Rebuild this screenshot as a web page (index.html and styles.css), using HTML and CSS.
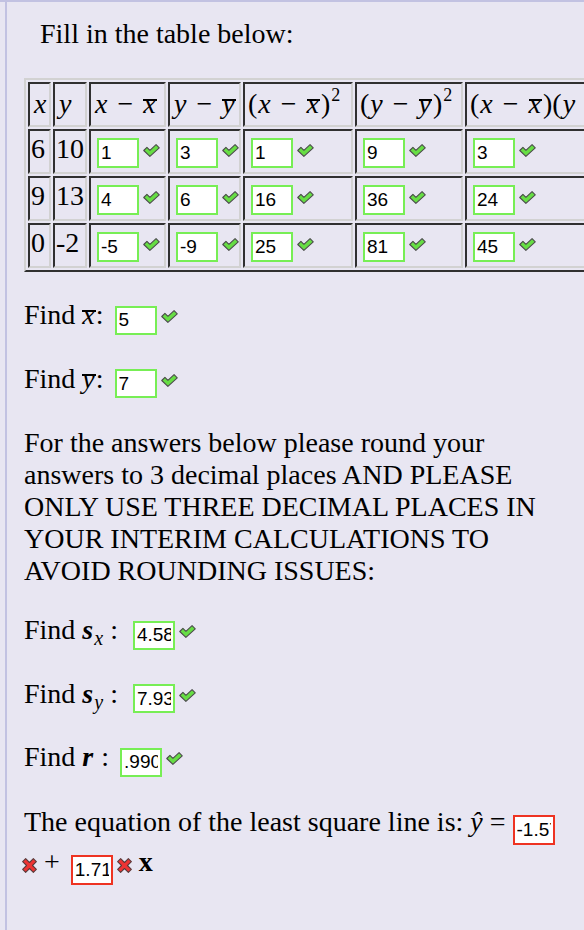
FILE: index.html
```html
<!DOCTYPE html>
<html>
<head>
<meta charset="utf-8">
<title>Least squares</title>
<link rel="stylesheet" href="styles.css">
</head>
<body>
<div class="page">
  <p class="intro">Fill in the table below:</p>

  <table class="grid">
    <tr class="head">
      <td class="c1"><div class="cell"><i>x</i></div></td>
      <td class="c2"><div class="cell"><i>y</i></div></td>
      <td class="c3"><div class="cell"><i>x</i><span class="mo">−</span><i class="bar">x</i></div></td>
      <td class="c4"><div class="cell"><i>y</i><span class="mo">−</span><i class="bar">y</i></div></td>
      <td class="c5"><div class="cell">(<i>x</i><span class="mo">−</span><i class="bar">x</i>)<sup>2</sup></div></td>
      <td class="c6"><div class="cell">(<i>y</i><span class="mo">−</span><i class="bar">y</i>)<sup>2</sup></div></td>
      <td class="c7"><div class="cell">(<i>x</i><span class="mo">−</span><i class="bar">x</i>)(<i>y</i><span class="mo">−</span><i class="bar">y</i>)</div></td>
    </tr>
    <tr>
      <td><div class="cell num">6</div></td>
      <td><div class="cell num">10</div></td>
      <td><div class="cell"><input class="ans" value="1" readonly><svg class="ok" viewBox="0 0 16 12"><polygon points="0.7,6 3.7,3 6.5,5.8 12.3,0.5 15.3,3.5 6.5,11.5"/></svg></div></td>
      <td><div class="cell"><input class="ans" value="3" readonly><svg class="ok" viewBox="0 0 16 12"><polygon points="0.7,6 3.7,3 6.5,5.8 12.3,0.5 15.3,3.5 6.5,11.5"/></svg></div></td>
      <td><div class="cell"><input class="ans" value="1" readonly><svg class="ok" viewBox="0 0 16 12"><polygon points="0.7,6 3.7,3 6.5,5.8 12.3,0.5 15.3,3.5 6.5,11.5"/></svg></div></td>
      <td><div class="cell"><input class="ans" value="9" readonly><svg class="ok" viewBox="0 0 16 12"><polygon points="0.7,6 3.7,3 6.5,5.8 12.3,0.5 15.3,3.5 6.5,11.5"/></svg></div></td>
      <td><div class="cell"><input class="ans" value="3" readonly><svg class="ok" viewBox="0 0 16 12"><polygon points="0.7,6 3.7,3 6.5,5.8 12.3,0.5 15.3,3.5 6.5,11.5"/></svg></div></td>
    </tr>
    <tr>
      <td><div class="cell num">9</div></td>
      <td><div class="cell num">13</div></td>
      <td><div class="cell"><input class="ans" value="4" readonly><svg class="ok" viewBox="0 0 16 12"><polygon points="0.7,6 3.7,3 6.5,5.8 12.3,0.5 15.3,3.5 6.5,11.5"/></svg></div></td>
      <td><div class="cell"><input class="ans" value="6" readonly><svg class="ok" viewBox="0 0 16 12"><polygon points="0.7,6 3.7,3 6.5,5.8 12.3,0.5 15.3,3.5 6.5,11.5"/></svg></div></td>
      <td><div class="cell"><input class="ans" value="16" readonly><svg class="ok" viewBox="0 0 16 12"><polygon points="0.7,6 3.7,3 6.5,5.8 12.3,0.5 15.3,3.5 6.5,11.5"/></svg></div></td>
      <td><div class="cell"><input class="ans" value="36" readonly><svg class="ok" viewBox="0 0 16 12"><polygon points="0.7,6 3.7,3 6.5,5.8 12.3,0.5 15.3,3.5 6.5,11.5"/></svg></div></td>
      <td><div class="cell"><input class="ans" value="24" readonly><svg class="ok" viewBox="0 0 16 12"><polygon points="0.7,6 3.7,3 6.5,5.8 12.3,0.5 15.3,3.5 6.5,11.5"/></svg></div></td>
    </tr>
    <tr>
      <td><div class="cell num">0</div></td>
      <td><div class="cell num">-2</div></td>
      <td><div class="cell"><input class="ans" value="-5" readonly><svg class="ok" viewBox="0 0 16 12"><polygon points="0.7,6 3.7,3 6.5,5.8 12.3,0.5 15.3,3.5 6.5,11.5"/></svg></div></td>
      <td><div class="cell"><input class="ans" value="-9" readonly><svg class="ok" viewBox="0 0 16 12"><polygon points="0.7,6 3.7,3 6.5,5.8 12.3,0.5 15.3,3.5 6.5,11.5"/></svg></div></td>
      <td><div class="cell"><input class="ans" value="25" readonly><svg class="ok" viewBox="0 0 16 12"><polygon points="0.7,6 3.7,3 6.5,5.8 12.3,0.5 15.3,3.5 6.5,11.5"/></svg></div></td>
      <td><div class="cell"><input class="ans" value="81" readonly><svg class="ok" viewBox="0 0 16 12"><polygon points="0.7,6 3.7,3 6.5,5.8 12.3,0.5 15.3,3.5 6.5,11.5"/></svg></div></td>
      <td><div class="cell"><input class="ans" value="45" readonly><svg class="ok" viewBox="0 0 16 12"><polygon points="0.7,6 3.7,3 6.5,5.8 12.3,0.5 15.3,3.5 6.5,11.5"/></svg></div></td>
    </tr>
  </table>

  <p class="find first">Find <i class="bar">x</i>: <input class="ans" value="5" readonly><svg class="ok" viewBox="0 0 16 12"><polygon points="0.7,6 3.7,3 6.5,5.8 12.3,0.5 15.3,3.5 6.5,11.5"/></svg></p>
  <p class="find">Find <i class="bar">y</i>: <input class="ans" value="7" readonly><svg class="ok" viewBox="0 0 16 12"><polygon points="0.7,6 3.7,3 6.5,5.8 12.3,0.5 15.3,3.5 6.5,11.5"/></svg></p>

  <p class="note">For the answers below please round your answers to 3 decimal places AND PLEASE ONLY USE THREE DECIMAL PLACES IN YOUR INTERIM CALCULATIONS TO AVOID ROUNDING ISSUES:</p>

  <p class="find after-note">Find <i class="mv">s</i><sub><i>x</i></sub> : <input class="ans wide" value="4.583" readonly><svg class="ok" viewBox="0 0 16 12"><polygon points="0.7,6 3.7,3 6.5,5.8 12.3,0.5 15.3,3.5 6.5,11.5"/></svg></p>
  <p class="find">Find <i class="mv">s</i><sub><i>y</i></sub> : <input class="ans wide" value="7.937" readonly><svg class="ok" viewBox="0 0 16 12"><polygon points="0.7,6 3.7,3 6.5,5.8 12.3,0.5 15.3,3.5 6.5,11.5"/></svg></p>
  <p class="find">Find <i class="mv">r</i> : <input class="ans" value=".990" readonly><svg class="ok" viewBox="0 0 16 12"><polygon points="0.7,6 3.7,3 6.5,5.8 12.3,0.5 15.3,3.5 6.5,11.5"/></svg></p>

  <p class="eq">The equation of the least square line is: <i>ŷ</i> = <input class="ans wrong" value="-1.571" readonly><wbr><svg class="bad lead" viewBox="0 0 14 14"><polygon points="0.6,3.4 3.4,0.6 7,4.2 10.6,0.6 13.4,3.4 9.8,7 13.4,10.6 10.6,13.4 7,9.8 3.4,13.4 0.6,10.6 4.2,7"/></svg> + <input class="ans wrong slope" value="1.714" readonly><svg class="bad" viewBox="0 0 14 14"><polygon points="0.6,3.4 3.4,0.6 7,4.2 10.6,0.6 13.4,3.4 9.8,7 13.4,10.6 10.6,13.4 7,9.8 3.4,13.4 0.6,10.6 4.2,7"/></svg> <b>x</b></p>
</div>
</body>
</html>
```

FILE: styles.css
```css
html {
  overflow: hidden;
}

body {
  margin: 0;
  background: #e8e6f2;
  border-top: 2px solid #c2c2e2;
  font-family: "Liberation Serif", "Times New Roman", serif;
  font-size: 28px;
  line-height: 32px;
  color: #000;
}

.page {
  margin-left: 5px;
  border-left: 2px solid #c2c2e2;
  padding: 0 19px 0 17px;
  min-height: 928px;
  box-sizing: border-box;
}

p {
  margin: 0;
}

.intro {
  padding-top: 16px;
  padding-left: 16px;
}

/* ---------- table ---------- */
.grid {
  margin-top: 28px;
  table-layout: fixed;
  width: 621px;
  border-collapse: separate;
  border-spacing: 2px;
  border: 2px solid;
  border-color: #d2d2d2 #303030 #303030 #d2d2d2;
}

.grid td {
  padding: 0;
  border: 2px solid;
  border-color: #303030 #d2d2d2 #d2d2d2 #303030;
  vertical-align: top;
  box-sizing: border-box;
  overflow: hidden;
}

.c1 { width: 23px; }
.c2 { width: 34px; }
.c3 { width: 77px; }
.c4 { width: 73px; }
.c5 { width: 110px; }
.c6 { width: 108px; }
.c7 { width: 176px; }

.cell {
  height: 41px;
  line-height: 35px;
  white-space: nowrap;
  padding-left: 6px;
}

.cell.num {
  padding-left: 1px;
}

.head .cell {
  line-height: 39px;
  padding-left: 3px;
}

.head i {
  margin: 0 1px;
}

.mo {
  margin: 0 9px;
}

.bar {
  display: inline-block;
  line-height: 5px;
  border-top: 2px solid #000;
  padding-right: 1px;
}

.head sup {
  font-size: 18px;
  vertical-align: 12px;
  line-height: 0;
  margin-left: 1px;
}

/* ---------- inputs & marks ---------- */
.ans {
  box-sizing: border-box;
  width: 42px;
  height: 30px;
  margin: 0;
  padding: 0 2px;
  border: 2px solid #77ee55;
  background: #fff;
  color: #000;
  font-family: "Liberation Sans", Arial, sans-serif;
  font-size: 19px;
  vertical-align: -1px;
  outline: none;
}

.ans.wrong {
  border-color: #ee3322;
}

.ok {
  width: 17px;
  height: 13px;
  margin-left: 4px;
  vertical-align: 1px;
}

.ok polygon {
  fill: #66dd44;
  stroke: #4a4a4a;
  stroke-width: 1;
  stroke-linejoin: round;
}

.bad {
  width: 15px;
  height: 15px;
  margin-left: 4px;
  vertical-align: -2px;
}

.bad.lead {
  margin-left: -2px;
}

.bad polygon {
  fill: #ee3333;
  stroke: #5a3a3a;
  stroke-width: 1;
  stroke-linejoin: round;
}

/* ---------- text rows ---------- */
.find {
  margin-top: 28px;
}

.find .ans {
  height: 29px;
  margin-left: 4px;
  vertical-align: -2px;
}

.find .ans.wide {
  margin-left: 8px;
}

.find.first {
  margin-top: 27px;
}

.mv {
  font-weight: bold;
  margin-right: 1px;
}

sub {
  font-size: 20px;
  line-height: 0;
  vertical-align: -6px;
}

.note {
  margin-top: 29px;
}

.find.after-note {
  margin-top: 27px;
}

.eq {
  margin-top: 28px;
  line-height: 34px;
}

.eq .ans {
  vertical-align: -5px;
}

.eq .ans.slope {
  margin-left: 4px;
}

.eq b {
  font-weight: bold;
}
```
